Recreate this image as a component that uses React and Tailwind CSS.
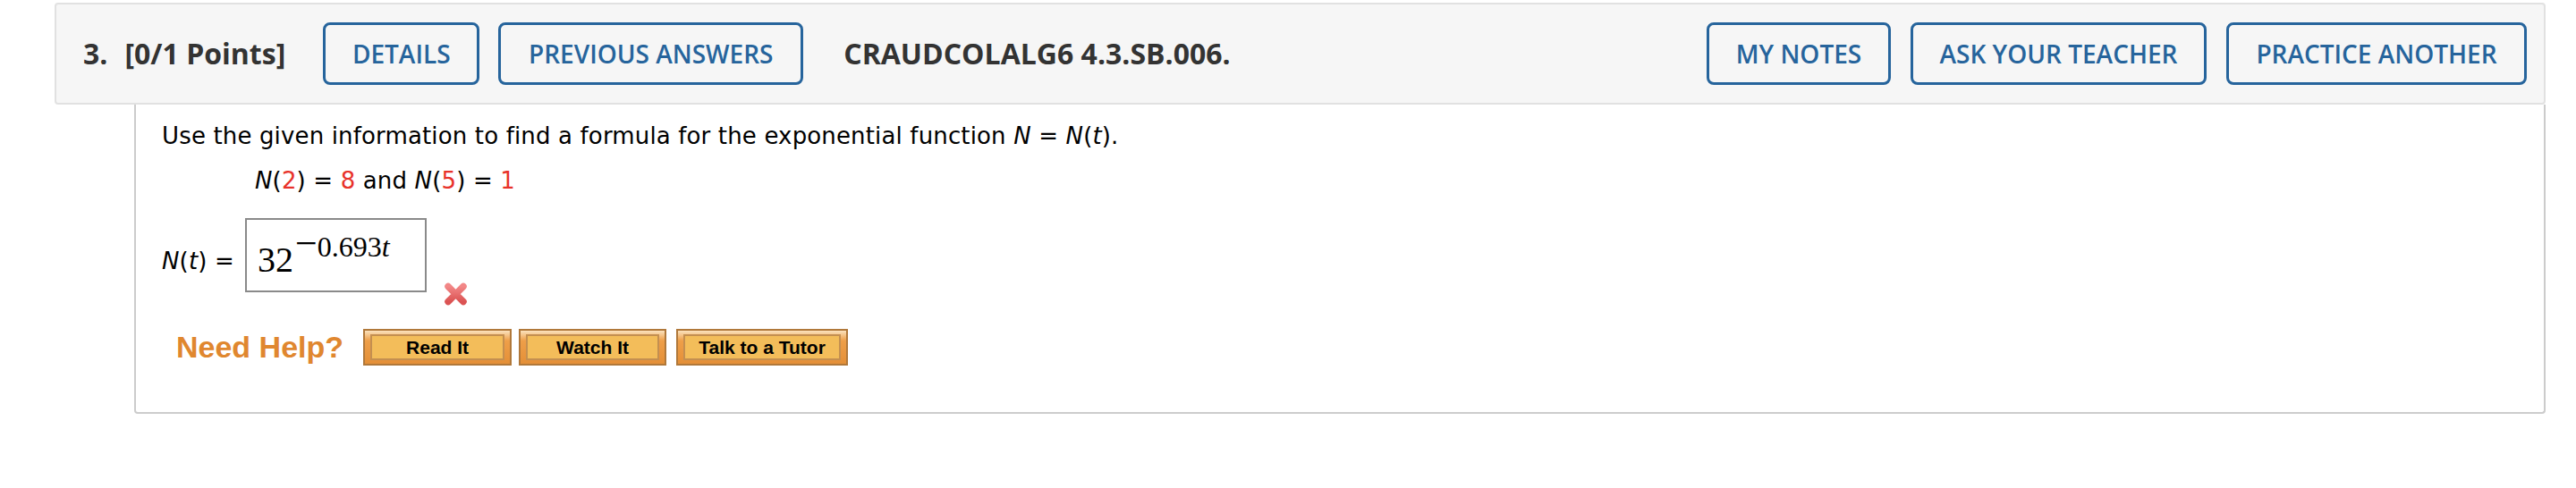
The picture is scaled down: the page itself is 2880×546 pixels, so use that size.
import React from 'react'

function OutlineButton({ label, w }) {
  return (
    <div className={`flex h-[70px] ${w} items-center justify-center rounded-[8px] border-[3px] border-[#26649c] text-[28px] font-semibold text-[#26649c]`}>
      {label}
    </div>
  )
}

function HelpButton({ label, w }) {
  return (
    <div className={`h-[41px] ${w} border-2 border-[#b0783a] bg-[linear-gradient(180deg,#fbe2bd_0%,#ee9f49_30%,#e48f37_100%)] px-[6px] py-[4px]`}>
      <div className="flex h-full items-center justify-center border-2 border-[#c48f50] bg-[#f3bd5a] font-['Liberation_Sans',Arial,sans-serif] text-[21px] font-bold text-black">
        {label}
      </div>
    </div>
  )
}

function Header() {
  return (
    <div className="flex h-[114px] items-center justify-between rounded-[4px] border-2 border-[#e1e1e1] bg-[#f6f6f6] pl-[30px] pr-[19px] font-['Open_Sans',sans-serif]">
      <div className="flex items-center">
        <span className="text-[32px] font-bold text-[#333]">3.</span>
        <span className="ml-[19px] text-[32px] font-bold text-[#333]">[0/1 Points]</span>
        <div className="ml-[42px]"><OutlineButton label="DETAILS" w="w-[175px]" /></div>
        <div className="ml-[21px]"><OutlineButton label="PREVIOUS ANSWERS" w="w-[341px]" /></div>
        <span className="ml-[45px] text-[32px] font-bold text-[#333]">CRAUDCOLALG6 4.3.SB.006.</span>
      </div>
      <div className="flex items-center gap-[22px]">
        <OutlineButton label="MY NOTES" w="w-[206px]" />
        <OutlineButton label="ASK YOUR TEACHER" w="w-[331px]" />
        <OutlineButton label="PRACTICE ANOTHER" w="w-[336px]" />
      </div>
    </div>
  )
}

function WrongMark() {
  return (
    <svg width="27" height="26" viewBox="0 0 27 26">
      <defs>
        <linearGradient id="xg" x1="0" y1="0" x2="0" y2="1">
          <stop offset="0" stopColor="#f28787" />
          <stop offset="1" stopColor="#db5353" />
        </linearGradient>
      </defs>
      <path d="M5 4.5 L22 21.5 M22 4.5 L5 21.5" stroke="url(#xg)" strokeWidth="7.5" strokeLinecap="round" />
    </svg>
  )
}

function Panel() {
  return (
    <div className="ml-[89px] rounded-b-[4px] border-2 border-t-0 border-[#cccccc] pb-[52px] pl-[29px] pt-[17px] font-['DejaVu_Sans',Verdana,sans-serif] text-[26px] tracking-[0.15px] text-black">
      <div className="leading-[36px]">
        Use the given information to find a formula for the exponential function <i>N</i> = <i>N</i>(<i>t</i>).
      </div>
      <div className="ml-[104px] mt-[14px] leading-[36px]">
        <i>N</i>(<span className="text-[#e8322a]">2</span>) = <span className="text-[#e8322a]">8</span> and <i>N</i>(<span className="text-[#e8322a]">5</span>) = <span className="text-[#e8322a]">1</span>
      </div>
      <div className="mt-[24px] flex items-start">
        <div className="mt-[30px] w-[93px] leading-[36px]"><i>N</i>(<i>t</i>) =</div>
        <div className="h-[83px] w-[203px] border-2 border-[#8a8a8a] pl-[12px] pt-[26px] font-['Liberation_Serif',serif] text-[40px] leading-[37px] tracking-normal">
          32<span className="relative -top-[17px] ml-[2px] text-[32px]"><span className="text-[44px] leading-[20px]">−</span>0.693<i>t</i></span>
        </div>
        <div className="ml-[19px] mt-[72px]"><WrongMark /></div>
      </div>
      <div className="mt-[26px] flex items-center pl-[16px] tracking-normal">
        <span className="font-['Liberation_Sans',Arial,sans-serif] text-[34px] font-bold leading-[41px] text-[#e0872f]">Need Help?</span>
        <div className="ml-[22px]"><HelpButton label="Read It" w="w-[166px]" /></div>
        <div className="ml-[8px]"><HelpButton label="Watch It" w="w-[165px]" /></div>
        <div className="ml-[11px]"><HelpButton label="Talk to a Tutor" w="w-[192px]" /></div>
      </div>
    </div>
  )
}

export default function App() {
  return (
    <div className="min-h-screen bg-white pl-[61px] pr-[34px] pt-[3px]">
      <Header />
      <Panel />
    </div>
  )
}
